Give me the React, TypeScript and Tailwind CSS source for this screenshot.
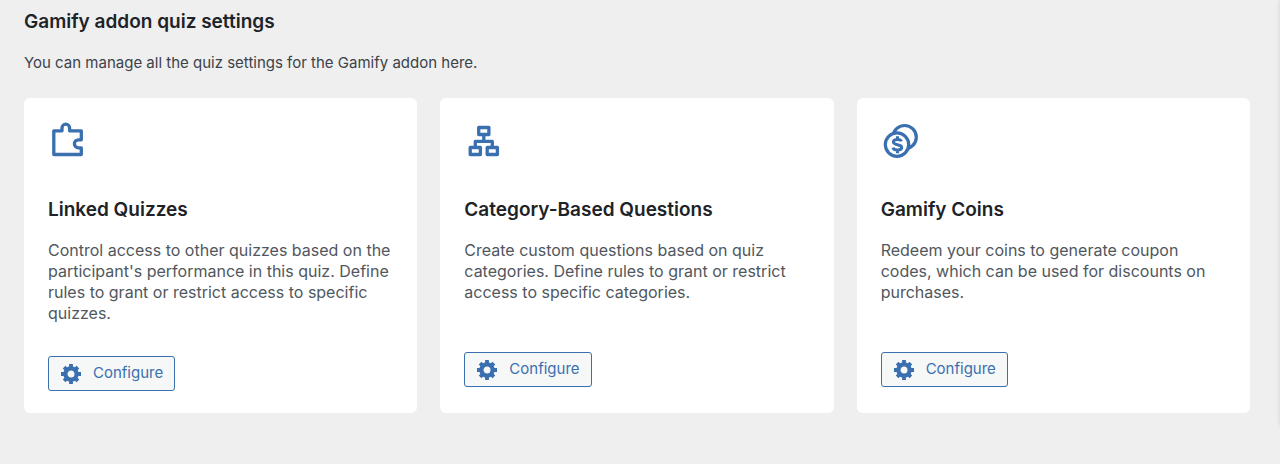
import type { ReactNode } from "react";

function PuzzleIcon() {
  return (
    <svg viewBox="0 0 40 40" className="size-10" fill="none" stroke="currentColor" strokeWidth="3.3" strokeLinejoin="round" aria-hidden="true">
      <path d="M5.8 10.8H14V8a3.8 3.8 0 0 1 7.6 0V10.8H33.3V19.8H30.4a4 4 0 0 0 0 8H33.3V34.5H5.8Z" />
    </svg>
  );
}

function SitemapIcon() {
  return (
    <svg viewBox="0 0 40 40" className="size-10" fill="none" stroke="currentColor" strokeWidth="3.3" strokeLinejoin="round" aria-hidden="true">
      <rect x="14.7" y="7.5" width="10.2" height="7" />
      <rect x="6.2" y="27.5" width="10.2" height="7" />
      <rect x="23.2" y="27.5" width="10.2" height="7" />
      <path d="M19.8 15V21.4M11.3 27V21.4H28.3V27" />
    </svg>
  );
}

function CoinsIcon() {
  return (
    <svg viewBox="0 0 40 40" className="size-10" fill="none" stroke="currentColor" strokeWidth="3.2" aria-hidden="true">
      <circle cx="23.6" cy="17.2" r="11.7" />
      <circle cx="16" cy="24.6" r="11.7" className="fill-white" />
      <path
        strokeWidth="3"
        d="M20.4 21.4C19.9 19.9 18.6 19.4 16.5 19.4C13.9 19.4 12.4 20.4 12.4 22C12.4 23.7 13.9 24.2 16.5 24.7C19.2 25.2 20.7 25.8 20.7 27.6C20.7 29.2 18.9 30.1 16.5 30.1C14 30.1 12.4 29.4 11.9 27.6M16.5 16.2V19.4M16.5 30V33.2"
      />
    </svg>
  );
}

function GearIcon() {
  return (
    <svg viewBox="0 0 20 20" className="size-5" aria-hidden="true">
      <circle cx="10" cy="10" r="5.6" fill="none" stroke="currentColor" strokeWidth="4.2" />
      <path
        fill="none"
        stroke="currentColor"
        strokeWidth="3.8"
        d="M10 0V4M10 16V20M0 10H4M16 10H20M3.1 3.1L5.9 5.9M14.1 14.1L16.9 16.9M3.1 16.9L5.9 14.1M14.1 5.9L16.9 3.1"
      />
    </svg>
  );
}

type Feature = { title: string; description: string; icon: ReactNode };

const features: Feature[] = [
  {
    title: "Linked Quizzes",
    description:
      "Control access to other quizzes based on the participant's performance in this quiz. Define rules to grant or restrict access to specific quizzes.",
    icon: <PuzzleIcon />,
  },
  {
    title: "Category-Based Questions",
    description:
      "Create custom questions based on quiz categories. Define rules to grant or restrict access to specific categories.",
    icon: <SitemapIcon />,
  },
  {
    title: "Gamify Coins",
    description:
      "Redeem your coins to generate coupon codes, which can be used for discounts on purchases.",
    icon: <CoinsIcon />,
  },
];

function FeatureCard({ title, description, icon }: Feature) {
  return (
    <article className="flex flex-col items-start rounded-md bg-white px-6 py-[22px] text-[#3a6fb0]">
      {icon}
      <h2 className="mt-9 text-[19px] leading-7 font-semibold text-[#1d2327]">{title}</h2>
      <p className="mt-4 min-h-20 text-[16px] leading-[21px] text-[#50575e]">{description}</p>
      <button
        type="button"
        className="mt-8 flex h-[35px] cursor-pointer items-center gap-3 rounded-[3px] border border-[#3a6fb0] bg-[#f6f7f7] pr-[11px] pl-3 text-[15px]"
      >
        <GearIcon />
        Configure
      </button>
    </article>
  );
}

export default function App() {
  return (
    <main className="relative min-h-screen overflow-hidden bg-[#efefef] pt-2 pr-[30px] pb-12 pl-6 font-['Inter',sans-serif]">
      <h1 className="text-[19px] leading-7 font-semibold text-[#1d2327]">Gamify addon quiz settings</h1>
      <p className="mt-4 text-[15px] leading-[21px] text-[#3c434a]">
        You can manage all the quiz settings for the Gamify addon here.
      </p>
      <div className="mt-[25px] grid grid-cols-1 gap-[23px] md:grid-cols-3">
        {features.map((feature) => (
          <FeatureCard key={feature.title} {...feature} />
        ))}
      </div>
      <div className="absolute top-0 -right-4 h-[426px] w-4 shadow-[0_0_5px_rgba(0,0,0,0.12)]" />
    </main>
  );
}
